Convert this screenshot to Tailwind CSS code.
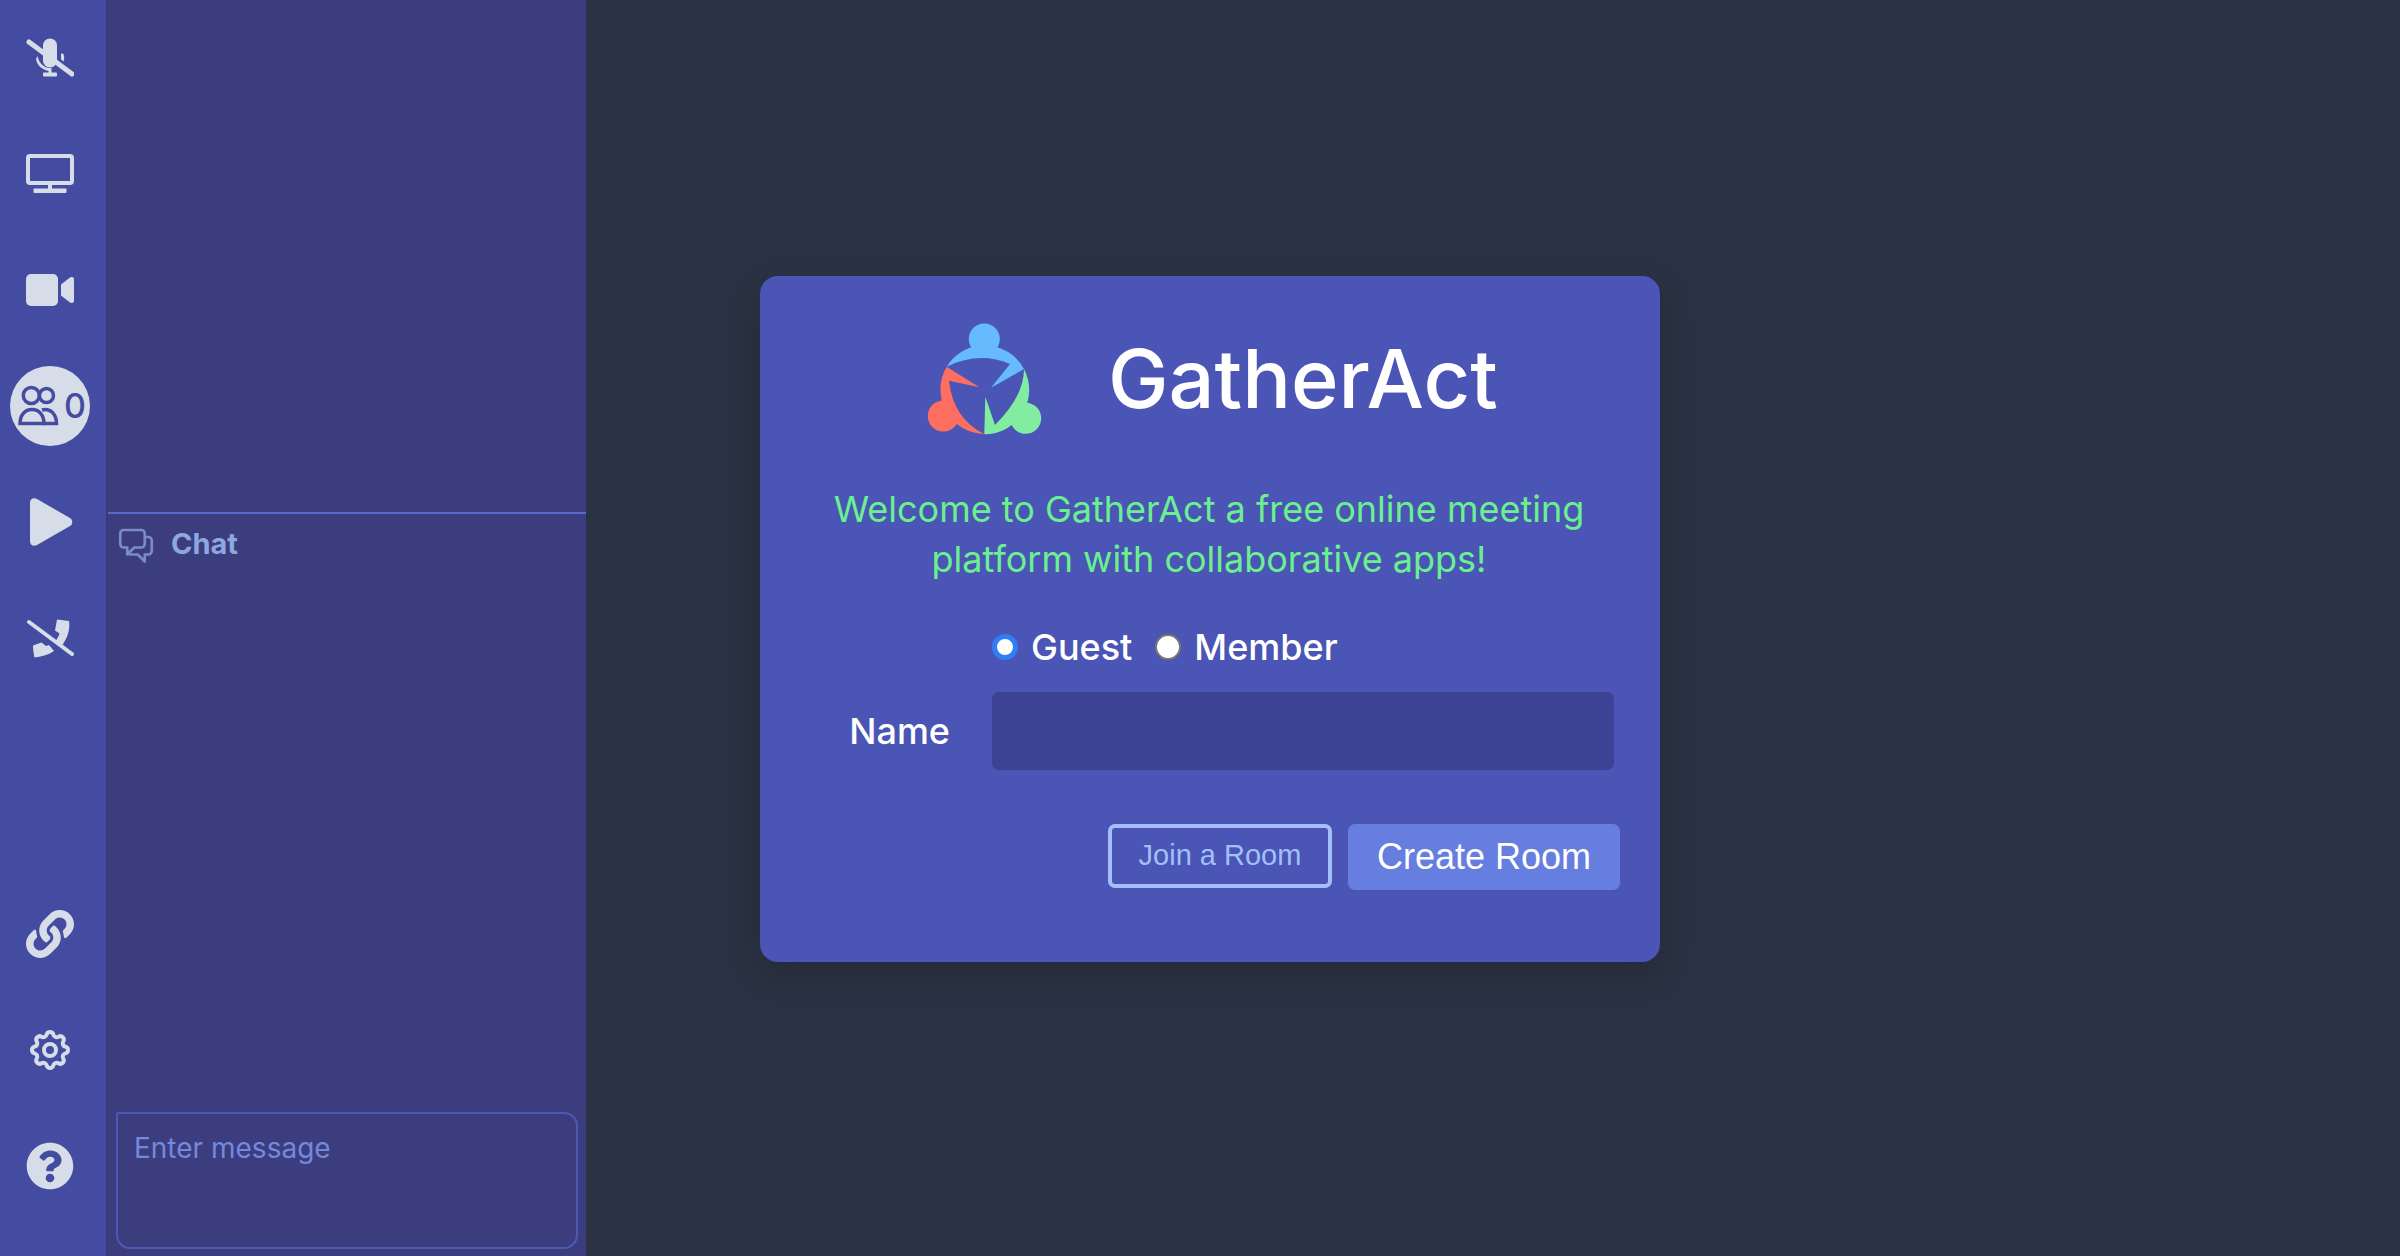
<!DOCTYPE html>
<html lang="en">
<head>
  <meta charset="UTF-8" />
  <title>GatherAct</title>
  <script src="https://cdn.jsdelivr.net/npm/@tailwindcss/browser@4"></script>
</head>
<body class="bg-[#2b3243] h-screen flex overflow-hidden font-['Inter',sans-serif]">

  <!-- icon rail -->
  <nav class="w-[106px] h-full bg-[#434ca0] flex flex-col justify-between pb-[32px] text-[#d7dde8] shrink-0">
    <div class="w-[100px] flex flex-col">
      <div class="h-[116px] flex items-center justify-center">
        <svg width="48" height="40" viewBox="0 0 48 40" fill="currentColor">
          <rect x="17" y="0.500" width="14" height="29" rx="7"/>
          <path d="M11.500 18 10 21c1 6 6 11 13 12v-3c-6-1-10-5-11.500-12z" />
          <path d="M35 15.500h2c1.500 2 1.500 5 .5 8l-2.500-2z"/>
          <path d="M22.500 30h3v6h-3z"/>
          <rect x="17" y="34.500" width="14" height="4" rx="1"/>
          <path d="M3 4l43 32" stroke="currentColor" stroke-width="5" stroke-linecap="round"/>
        </svg>
      </div>
      <div class="h-[116px] flex items-center justify-center">
        <svg width="48" height="40" viewBox="0 0 48 40" fill="none" stroke="currentColor">
          <rect x="2" y="2" width="44" height="27" rx="2" stroke-width="4"/>
          <path d="M24 30v5" stroke-width="4"/>
          <rect x="7.500" y="34.500" width="33" height="4.500" rx="1" fill="currentColor" stroke="none"/>
        </svg>
      </div>
      <div class="h-[116px] flex items-center justify-center">
        <svg width="48" height="32" viewBox="0 0 48 32" fill="currentColor">
          <rect x="0" y="0" width="32" height="32" rx="5"/>
          <path d="M35 10.500l9-7c2-1 4-.5 4 2v21c0 2.500-2 3-4 2l-9-7z"/>
        </svg>
      </div>
      <div class="h-[116px] flex items-center justify-center">
        <div class="w-[80px] h-[80px] rounded-full bg-[#d7dde8] flex items-center text-[#434ca0] pl-[8px]">
          <svg width="42" height="42" viewBox="0 0 42 42" fill="none" stroke="currentColor" stroke-width="3.500">
            <circle cx="13.300" cy="10.500" r="8"/>
            <circle cx="28.500" cy="10.500" r="7"/>
            <path d="M2 38.500C2 30 7 24.500 14 24.500S26 30 26 38.500Z"/>
            <path d="M24 25C33 22.500 38.500 30 38.500 38.500H26"/>
          </svg>
          <span class="text-[34px] font-medium ml-[4px] leading-none">0</span>
        </div>
      </div>
      <div class="h-[116px] flex items-center justify-center">
        <svg width="44" height="50" viewBox="0 0 44 50" fill="currentColor" class="ml-[1px]">
          <path d="M1 6c0-4 3-6 7-4l33 19c3 2 3 6 0 8L8 48c-4 2-7 0-7-4z"/>
        </svg>
      </div>
      <div class="h-[116px] flex items-center justify-center">
        <svg width="48" height="40" viewBox="0 0 48 40" fill="currentColor">
          <path d="M31 1.500 43 3C44.500 12 41 21 35 29L29 24C31 21 33 18 33.500 15.500L29 12.500Z"/>
          <path d="M7 27.500 15.500 24.500 20 28 23 27 28 33C22 37 15 39 8.500 39.500 7.500 35 7 31 7 27.500Z"/>
          <path d="M3 4l43 32" stroke="currentColor" stroke-width="4" stroke-linecap="round"/>
        </svg>
      </div>
    </div>
    <div class="w-[100px] flex flex-col">
      <div class="h-[116px] flex items-center justify-center">
        <svg width="48" height="48" viewBox="0 0 512 512" fill="currentColor">
          <path d="M326.612 185.391c59.747 59.809 58.927 155.698.36 214.59-.11.12-.24.25-.36.37l-67.2 67.2c-59.27 59.27-155.699 59.262-214.96 0-59.27-59.26-59.27-155.7 0-214.96l37.106-37.106c9.84-9.84 26.786-3.3 27.294 10.606.648 17.722 3.826 35.527 9.69 52.721 1.986 5.822.567 12.262-3.783 16.612l-13.087 13.087c-28.026 28.026-28.905 73.66-1.155 101.96 28.024 28.579 74.086 28.749 102.325.51l67.2-67.19c28.191-28.191 28.073-73.757 0-101.83-3.701-3.694-7.429-6.564-10.341-8.569a16.037 16.037 0 0 1-6.947-12.606c-.396-10.567 3.348-21.456 11.698-29.806l21.054-21.055c5.521-5.521 14.182-6.199 20.584-1.731a152.482 152.482 0 0 1 20.522 17.197zM467.547 44.449c-59.261-59.262-155.69-59.27-214.96 0l-67.2 67.2c-.12.12-.25.25-.36.37-58.566 58.892-59.387 154.781.36 214.59a152.454 152.454 0 0 0 20.521 17.196c6.402 4.468 15.064 3.789 20.584-1.731l21.054-21.055c8.35-8.35 12.094-19.239 11.698-29.806a16.037 16.037 0 0 0-6.947-12.606c-2.912-2.005-6.64-4.875-10.341-8.569-28.073-28.073-28.191-73.639 0-101.83l67.2-67.19c28.239-28.239 74.3-28.069 102.325.51 27.75 28.3 26.872 73.934-1.155 101.96l-13.087 13.087c-4.35 4.35-5.769 10.79-3.783 16.612 5.864 17.194 9.042 34.999 9.69 52.721.509 13.906 17.454 20.446 27.294 10.606l37.106-37.106c59.271-59.259 59.271-155.699.001-214.959z"/>
        </svg>
      </div>
      <div class="h-[116px] flex items-center justify-center">
        <svg width="48" height="48" viewBox="0 0 24 24" fill="none" stroke="currentColor" stroke-width="2" stroke-linecap="round" stroke-linejoin="round">
          <path d="M10.325 4.317c.426-1.756 2.924-1.756 3.35 0a1.724 1.724 0 002.573 1.066c1.543-.94 3.31.826 2.37 2.37a1.724 1.724 0 001.065 2.572c1.756.426 1.756 2.924 0 3.35a1.724 1.724 0 00-1.066 2.573c.94 1.543-.826 3.31-2.37 2.37a1.724 1.724 0 00-2.572 1.065c-.426 1.756-2.924 1.756-3.35 0a1.724 1.724 0 00-2.573-1.066c-1.543.94-3.31-.826-2.37-2.37a1.724 1.724 0 00-1.065-2.572c-1.756-.426-1.756-2.924 0-3.35a1.724 1.724 0 001.066-2.573c-.94-1.543.826-3.31 2.37-2.37.996.608 2.296.07 2.572-1.065z"/>
          <path d="M15 12a3 3 0 11-6 0 3 3 0 016 0z"/>
        </svg>
      </div>
      <div class="h-[116px] flex items-center justify-center">
        <svg width="48" height="48" viewBox="0 0 512 512" fill="currentColor">
          <path d="M504 256c0 136.997-111.043 248-248 248S8 392.997 8 256C8 119.083 119.043 8 256 8s248 111.083 248 248zM262.655 90c-54.497 0-89.255 22.957-116.549 63.758-3.536 5.286-2.353 12.415 2.715 16.258l34.699 26.31c5.205 3.947 12.621 3.008 16.665-2.122 17.864-22.658 30.113-35.797 57.303-35.797 20.429 0 45.698 13.148 45.698 32.958 0 14.976-12.363 22.667-32.534 33.976C247.128 238.528 216 254.941 216 296v4c0 6.627 5.373 12 12 12h56c6.627 0 12-5.373 12-12v-1.333c0-28.462 83.186-29.647 83.186-106.667 0-58.002-60.165-102-116.531-102zM256 338c-25.365 0-46 20.635-46 46 0 25.364 20.635 46 46 46s46-20.636 46-46c0-25.365-20.635-46-46-46z"/>
        </svg>
      </div>
    </div>
  </nav>

  <!-- chat panel -->
  <aside class="w-[480px] h-full bg-[#3c3d7e] border-l-2 border-[#3a3a75] flex flex-col shrink-0">
    <div class="h-[512px] border-b-2 border-[#5a68c8] box-content"></div>
    <div class="flex items-center h-[60px] pl-[7px] text-[#8fa6de]">
      <svg width="42" height="42" viewBox="0 0 24 24" fill="none" stroke="#7a8cc8" stroke-width="1.500" stroke-linecap="round" stroke-linejoin="round">
        <path d="M17 8h2a2 2 0 012 2v6a2 2 0 01-2 2h-2v4l-4-4H9a1.994 1.994 0 01-1.414-.586m0 0L11 14h4a2 2 0 002-2V6a2 2 0 00-2-2H5a2 2 0 00-2 2v6a2 2 0 002 2h2v4l.586-.586z"/>
      </svg>
      <span class="text-[29px] font-bold ml-[14px]">Chat</span>
    </div>
    <div class="flex-1"></div>
    <div class="pl-[8px] pr-[8px] pb-[7px]">
      <div class="h-[137px] border-2 border-[#4c59b5] rounded-tl-[2px] rounded-tr-[14px] rounded-b-[14px] px-[16px] pt-[16px] text-[28px] leading-[36px] text-[#7289dc]">Enter message</div>
    </div>
  </aside>

  <!-- login card -->
  <main class="flex-1 flex items-start pt-[276px] pl-[174px]">
    <div class="w-[900px] h-[686px] bg-[#4a55b5] rounded-[18px] shadow-[0_12px_36px_rgba(0,0,0,0.18)] flex flex-col">
      <div class="flex items-center h-[120px] mt-[43px] pl-[165px]">
        <svg width="120" height="112" viewBox="0 0 120 112" class="shrink-0">
          <g transform="translate(-925,-323)">
            <circle fill="#66bbff" cx="984.300" cy="339" r="15.500"/>
            <path fill="#66bbff" d="M946.700 366.700A44.500 44.500 0 0 1 1024 369L991 387.700 1010 364Q979 351 946.700 366.700Z"/>
            <circle fill="#ff6f61" cx="943.300" cy="416" r="15.500"/>
            <path fill="#ff6f61" d="M946.700 366.700 979.300 387.300 949 380.700Q953 418.600 984.300 434A44.500 44.500 0 0 1 946.700 366.700Z"/>
            <circle fill="#82eca0" cx="1025.700" cy="418.300" r="15.500"/>
            <path fill="#82eca0" d="M1024 369Q1023.900 396.400 995 425L985.300 396.700 984.300 434.300A44.500 44.500 0 0 0 1024 369Z"/>
          </g>
        </svg>
        <span class="text-[81px] leading-none font-medium text-white ml-[63px]">GatherAct</span>
      </div>
      <p class="mt-[45px] -ml-[2px] text-center text-[36px] leading-[50px] text-[#6bf090]">Welcome to GatherAct a free online meeting<br>platform with collaborative apps!</p>
      <div class="flex items-center mt-[38px] ml-[232px] text-[36px] font-medium text-white h-[50px]">
        <span class="w-[26px] h-[26px] rounded-full bg-white border-[5px] border-[#2f7ef5]"></span>
        <span class="ml-[13px]">Guest</span>
        <span class="ml-[23px] w-[26px] h-[26px] rounded-full bg-white border-2 border-[#767676]"></span>
        <span class="ml-[13px]">Member</span>
      </div>
      <div class="flex items-center mt-[20px]">
        <span class="w-[190px] text-right text-[36px] font-medium text-white">Name</span>
        <div class="ml-[42px] w-[622px] h-[78px] rounded-[7px] bg-[#3d4394]"></div>
      </div>
      <div class="flex items-start justify-end mt-[54px] pr-[40px] font-['Liberation_Sans',sans-serif]">
        <button class="h-[64px] w-[224px] rounded-[7px] border-[4px] border-[#a3bffa] text-[29px] text-[#a3bffa]">Join a Room</button>
        <button class="h-[66px] w-[272px] ml-[16px] rounded-[7px] bg-[#667ee0] text-[36px] text-white">Create Room</button>
      </div>
    </div>
  </main>

</body>
</html>
